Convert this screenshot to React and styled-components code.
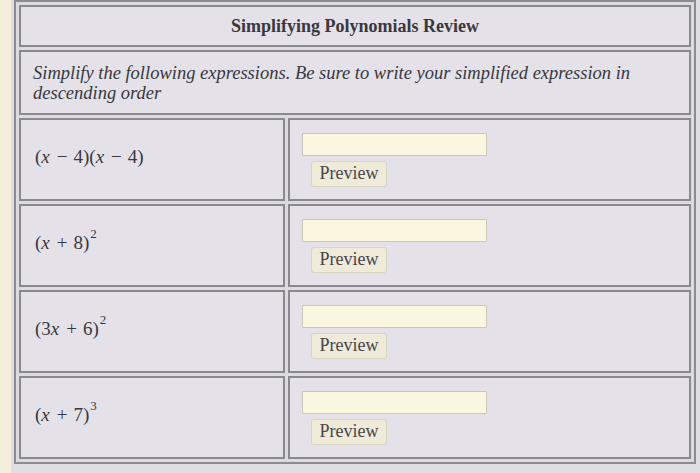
import React from 'react';
import styled, { createGlobalStyle } from 'styled-components';

const GlobalStyle = createGlobalStyle`
  html, body {
    margin: 0;
    padding: 0;
    background: #f3efdc;
  }
  body {
    font-family: "Liberation Serif", "Times New Roman", serif;
    color: #38383e;
  }
`;

const problems = [
  { expr: ['(', 'x', '−', '4)(', 'x', '−', '4)'] },
  { expr: ['(', 'x', '+', '8)'], power: '2' },
  { expr: ['(3', 'x', '+', '6)'], power: '2' },
  { expr: ['(', 'x', '+', '7)'], power: '3' },
];

const renderPart = (part, j) => {
  if (part === 'x') return <Var key={j}>x</Var>;
  if (part === '−' || part === '+') return <Op key={j}>{part}</Op>;
  return <span key={j}>{part}</span>;
};

const App = () => {
  return (
    <>
      <GlobalStyle />
      <Page>
        <Table>
          <colgroup>
            <LeftCol />
            <col />
          </colgroup>
          <tbody>
            <tr>
              <TitleCell colSpan={2}>Simplifying Polynomials Review</TitleCell>
            </tr>
            <tr>
              <InstructionCell colSpan={2}>
                Simplify the following expressions. Be sure to write your simplified expression in
                descending order
              </InstructionCell>
            </tr>
            {problems.map((p, i) => (
              <tr key={i}>
                <MathCell>
                  <Math>
                    {p.expr.map(renderPart)}
                    {p.power && <Sup>{p.power}</Sup>}
                  </Math>
                </MathCell>
                <AnswerCell>
                  <AnswerInput type="text" />
                  <PreviewButton type="button">Preview</PreviewButton>
                </AnswerCell>
              </tr>
            ))}
          </tbody>
        </Table>
      </Page>
    </>
  );
};

const Page = styled.div`
  margin-left: 11px;
  min-height: 473px;
  background: #dfdee3;
  padding: 0 4px 0 3px;
  box-sizing: border-box;
`;

const Table = styled.table`
  width: 682px;
  table-layout: fixed;
  border: 2px solid #8c8b92;
  border-spacing: 3px;
  background: #dcdbe0;
`;

const LeftCol = styled.col`
  width: 266px;
`;

const Cell = styled.td`
  border: 2px solid #8a8990;
  background: #e4e2e8;
  vertical-align: middle;
`;

const TitleCell = styled(Cell)`
  height: 38px;
  text-align: center;
  font-weight: bold;
  font-size: 18px;
  padding: 0;
`;

const InstructionCell = styled(Cell)`
  height: 61px;
  padding: 0 12px;
  font-style: italic;
  font-size: 18.5px;
  line-height: 20px;
`;

const MathCell = styled(Cell)`
  height: 79px;
  padding: 0 0 0 14px;
`;

const Math = styled.span`
  font-size: 19px;
  white-space: pre;
  position: relative;
  top: -3px;
`;

const Var = styled.i`
  font-style: italic;
  padding-right: 1px;
`;

const Op = styled.span`
  padding: 0 6px;
`;

const Sup = styled.sup`
  font-size: 13px;
  vertical-align: 11px;
  line-height: 0;
  padding-left: 1px;
`;

const AnswerCell = styled(Cell)`
  height: 79px;
  padding: 0 12px;
`;

const AnswerInput = styled.input`
  display: block;
  width: 185px;
  height: 23px;
  box-sizing: border-box;
  margin: 0 0 5px 0;
  background: #fbf6df;
  border: 1px solid #cbc7b6;
  border-radius: 1px;
  outline: none;
`;

const PreviewButton = styled.button`
  display: block;
  margin-left: 9px;
  width: 76px;
  height: 26px;
  padding: 0;
  font-family: "Liberation Serif", "Times New Roman", serif;
  font-size: 18px;
  color: #46464a;
  background: #efebd8;
  border: 1px solid #d8d4c2;
  border-radius: 3px;
`;

export default App;
